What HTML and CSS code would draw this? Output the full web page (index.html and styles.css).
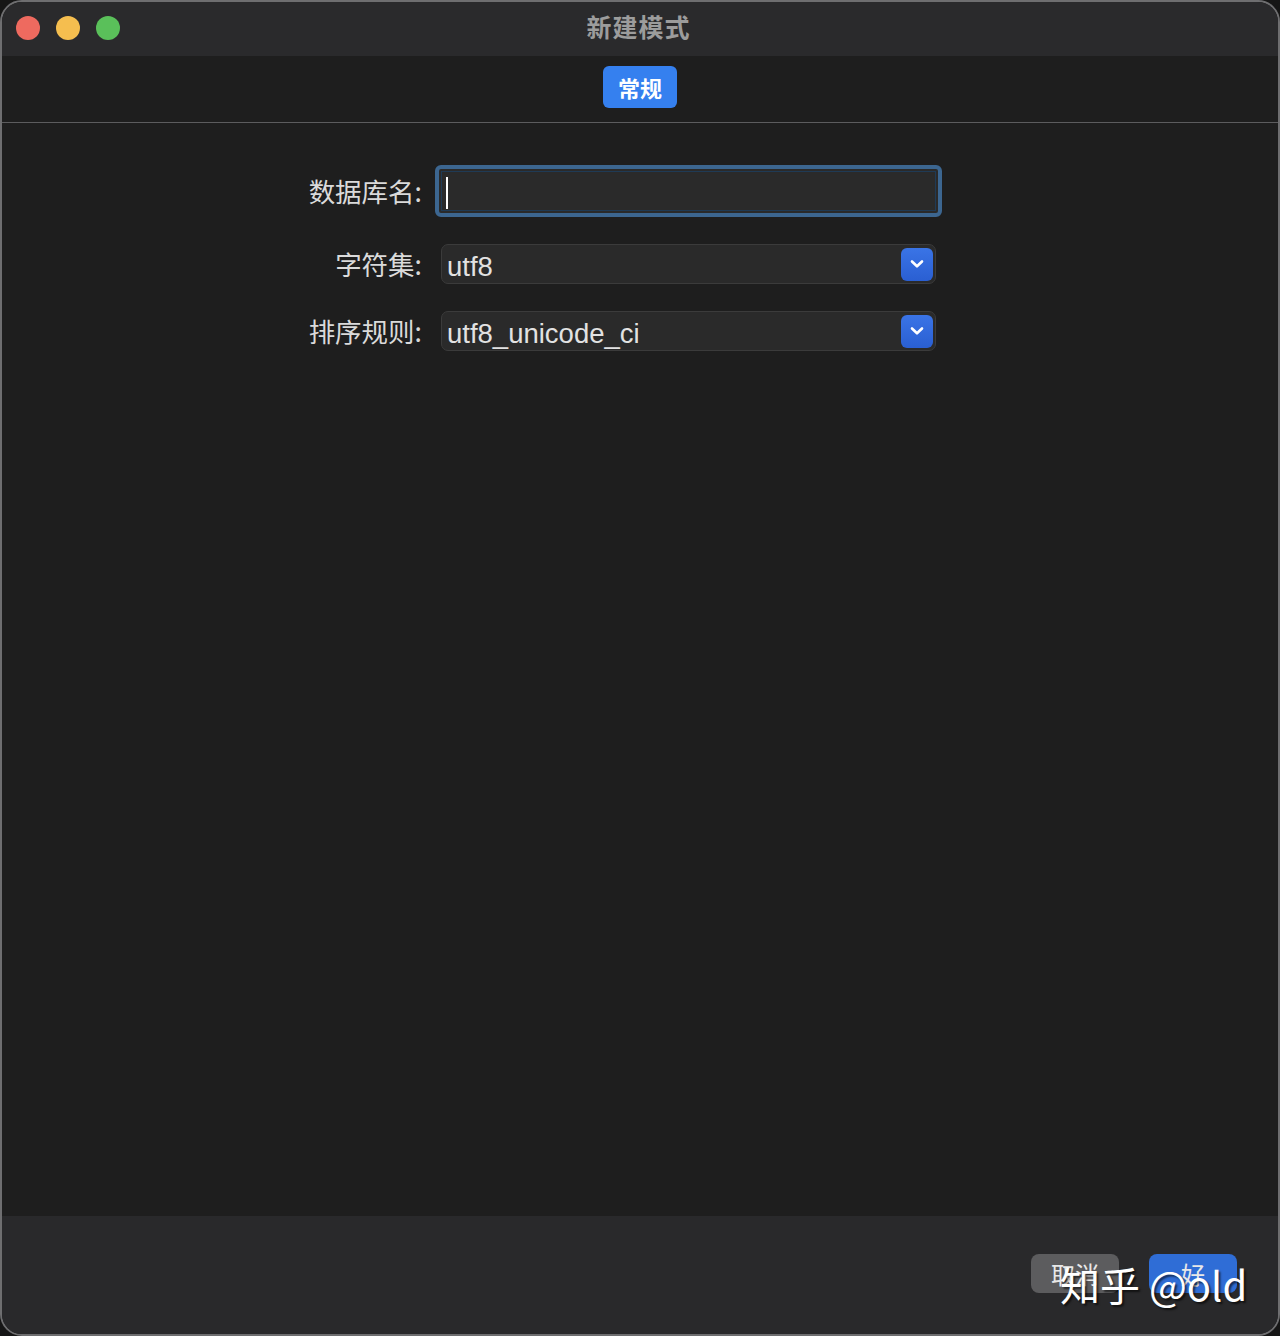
FILE: index.html
```html
<!DOCTYPE html>
<html lang="zh-CN">
<head>
<meta charset="utf-8">
<title>新建模式</title>
<link rel="stylesheet" href="styles.css">
</head>
<body>
<div class="window">
  <header class="titlebar">
    <div class="lights">
      <span class="light red"></span>
      <span class="light yellow"></span>
      <span class="light green"></span>
    </div>
    <div class="title">新建模式</div>
  </header>
  <nav class="tabs">
    <button class="tab active">常规</button>
  </nav>
  <main class="content">
    <div class="form">
      <label class="label">数据库名:</label>
      <div class="input-ring"><div class="input"><span class="caret"></span></div></div>
      <label class="label">字符集:</label>
      <div class="select"><span class="value">utf8</span><span class="arrow"><svg width="16" height="12" viewBox="0 0 16 12"><path d="M3 3.5 L8 8.3 L13 3.5" fill="none" stroke="#fff" stroke-width="2.6" stroke-linecap="round" stroke-linejoin="round"/></svg></span></div>
      <label class="label">排序规则:</label>
      <div class="select"><span class="value">utf8_unicode_ci</span><span class="arrow"><svg width="16" height="12" viewBox="0 0 16 12"><path d="M3 3.5 L8 8.3 L13 3.5" fill="none" stroke="#fff" stroke-width="2.6" stroke-linecap="round" stroke-linejoin="round"/></svg></span></div>
    </div>
  </main>
  <footer class="footer">
    <button class="btn cancel">取消</button>
    <button class="btn ok">好</button>
    <div class="watermark">知乎 @old</div>
  </footer>
</div>
</body>
</html>
```
FILE: styles.css
```css
html, body {
  margin: 0;
  padding: 0;
  background: #161616;
}
body {
  width: 1280px;
  height: 1336px;
  font-family: "Liberation Sans", "Noto Sans CJK SC", sans-serif;
}
.window {
  box-sizing: border-box;
  width: 1280px;
  height: 1336px;
  border: 2px solid #6e6e70;
  border-radius: 22px;
  overflow: hidden;
  display: flex;
  flex-direction: column;
  background: #1e1e1e;
}
.titlebar {
  height: 54px;
  flex: none;
  background: #2a2a2c;
  position: relative;
  display: flex;
  align-items: center;
  justify-content: center;
}
.lights {
  position: absolute;
  left: 14px;
  top: 14px;
  display: flex;
  gap: 16px;
}
.light {
  width: 24px;
  height: 24px;
  border-radius: 50%;
  display: block;
}
.red { background: #ee6a5f; }
.yellow { background: #f5be4f; }
.green { background: #5ac05a; }
.title {
  color: #9c9c9c;
  font-family: "Noto Sans CJK SC", sans-serif;
  font-size: 25px;
  font-weight: 700;
  letter-spacing: 1px;
  margin-top: -6px;
  margin-left: -3px;
}
.tabs {
  height: 67px;
  flex: none;
  display: flex;
  justify-content: center;
  align-items: flex-start;
  padding-top: 10px;
  box-sizing: border-box;
  border-bottom: 1px solid #5c5c5e;
  background: #1e1e1e;
}
.tab {
  width: 74px;
  height: 42px;
  border: none;
  border-radius: 6px;
  background: #3580ef;
  color: #fff;
  font-family: "Noto Sans CJK SC", sans-serif;
  font-size: 22px;
  font-weight: 700;
  padding: 0;
  margin-left: 0;
}
.content {
  flex: 1;
  background: #1e1e1e;
  padding-top: 42px;
}
.form {
  display: grid;
  grid-template-columns: 420px 507px;
  grid-template-rows: 52px 40px 40px;
  row-gap: 27px;
  column-gap: 13px;
  align-items: center;
}
.label {
  justify-self: end;
  color: #dadada;
  font-family: "Noto Sans CJK SC", sans-serif;
  font-size: 26.5px;
  line-height: 1;
}
.input-ring {
  box-sizing: border-box;
  width: 507px;
  height: 52px;
  border: 4px solid #3c6690;
  border-radius: 6px;
  background: #2a2a2a;
  padding: 2px;
}
.input {
  height: 100%;
  background: #2a2a2a;
  border: 1px solid #1f3a55;
  box-sizing: border-box;
  position: relative;
}
.caret {
  position: absolute;
  left: 4px;
  top: 5px;
  width: 2px;
  height: 32px;
  background: #ffffff;
}
.select {
  box-sizing: border-box;
  width: 495px;
  height: 40px;
  margin-left: 6px;
  border: 1px solid #3b3b3b;
  border-radius: 7px;
  background: #2a2a2a;
  display: flex;
  align-items: center;
  justify-content: space-between;
  padding: 0 2px 0 5px;
}
.value {
  color: #e2e2e2;
  font-size: 27.5px;
  margin-top: 6px;
}
.arrow {
  width: 32px;
  height: 33px;
  border-radius: 6px;
  background: linear-gradient(#3a74e6, #2a5fd2);
  display: flex;
  align-items: center;
  justify-content: center;
}
.footer {
  height: 118px;
  flex: none;
  background: #29292b;
  display: flex;
  justify-content: flex-end;
  align-items: flex-start;
  padding: 38px 41px 0 0;
  box-sizing: border-box;
  gap: 30px;
  position: relative;
}
.btn {
  width: 88px;
  height: 39px;
  border: none;
  border-radius: 8px;
  color: #e8e8e8;
  font-family: "Noto Sans CJK SC", sans-serif;
  font-size: 24px;
  padding: 0;
}
.cancel { background: #5c5c5e; }
.ok { background: #2f6dd6; }
.watermark {
  position: absolute;
  left: 1058px;
  top: 40px;
  color: #ffffff;
  font-family: "Noto Sans CJK SC", sans-serif;
  font-size: 40px;
  line-height: 56px;
  text-shadow: 2px 2px 2px rgba(0,0,0,0.6);
  white-space: nowrap;
}
```
